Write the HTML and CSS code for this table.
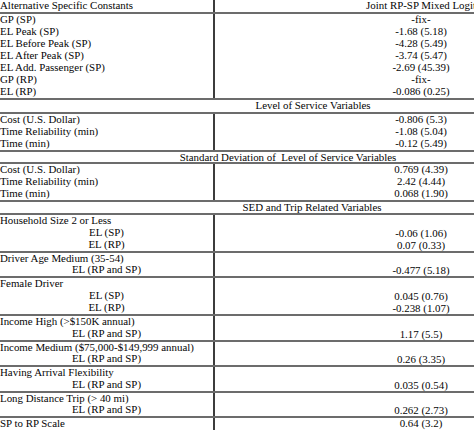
FILE: index.html
```html
<!DOCTYPE html>
<html>
<head>
<meta charset="utf-8">
<link rel="stylesheet" href="styles.css">
</head>
<body>
<div class="table">
  <div class="grp">
    <div class="row"><div class="l">Alternative Specific Constants</div><div class="r"><span>Joint RP-SP Mixed Logit</span></div></div>
  </div>
  <div class="grp">
    <div class="row"><div class="l">GP (SP)</div><div class="r"><span>-fix-</span></div></div>
    <div class="row"><div class="l">EL Peak (SP)</div><div class="r"><span>-1.68 (5.18)</span></div></div>
    <div class="row"><div class="l">EL Before Peak (SP)</div><div class="r"><span>-4.28 (5.49)</span></div></div>
    <div class="row"><div class="l">EL After Peak (SP)</div><div class="r"><span>-3.74 (5.47)</span></div></div>
    <div class="row"><div class="l">EL Add. Passenger (SP)</div><div class="r"><span>-2.69 (45.39)</span></div></div>
    <div class="row"><div class="l">GP (RP)</div><div class="r"><span>-fix-</span></div></div>
    <div class="row"><div class="l">EL (RP)</div><div class="r"><span>-0.086 (0.25)</span></div></div>
  </div>
  <div class="sec sec-los">Level of Service Variables</div>
  <div class="grp">
    <div class="row"><div class="l">Cost (U.S. Dollar)</div><div class="r"><span>-0.806 (5.3)</span></div></div>
    <div class="row"><div class="l">Time Reliability (min)</div><div class="r"><span>-1.08 (5.04)</span></div></div>
    <div class="row"><div class="l">Time (min)</div><div class="r"><span>-0.12 (5.49)</span></div></div>
  </div>
  <div class="sec sec-sd">Standard Deviation of&nbsp; Level of Service Variables</div>
  <div class="grp">
    <div class="row"><div class="l">Cost (U.S. Dollar)</div><div class="r"><span>0.769 (4.39)</span></div></div>
    <div class="row"><div class="l">Time Reliability (min)</div><div class="r"><span>2.42 (4.44)</span></div></div>
    <div class="row"><div class="l">Time (min)</div><div class="r"><span>0.068 (1.90)</span></div></div>
  </div>
  <div class="sec sec-sed">SED and Trip Related Variables</div>
  <div class="grp">
    <div class="row"><div class="l">Household Size 2 or Less</div><div class="r"></div></div>
    <div class="row"><div class="l sub">EL (SP)</div><div class="r low"><span>-0.06 (1.06)</span></div></div>
    <div class="row"><div class="l sub">EL (RP)</div><div class="r low"><span>0.07 (0.33)</span></div></div>
  </div>
  <div class="grp g2">
    <div class="row"><div class="l">Driver Age Medium (35-54)</div><div class="r"></div></div>
    <div class="row"><div class="l sub">EL (RP and SP)</div><div class="r low"><span>-0.477 (5.18)</span></div></div>
  </div>
  <div class="grp">
    <div class="row"><div class="l">Female Driver</div><div class="r"></div></div>
    <div class="row"><div class="l sub">EL (SP)</div><div class="r low"><span>0.045 (0.76)</span></div></div>
    <div class="row"><div class="l sub">EL (RP)</div><div class="r low"><span>-0.238 (1.07)</span></div></div>
  </div>
  <div class="grp g2">
    <div class="row"><div class="l">Income High (&gt;$150K annual)</div><div class="r"></div></div>
    <div class="row"><div class="l sub">EL (RP and SP)</div><div class="r low"><span>1.17 (5.5)</span></div></div>
  </div>
  <div class="grp g2">
    <div class="row"><div class="l">Income Medium ($75,000-$149,999 annual)</div><div class="r"></div></div>
    <div class="row"><div class="l sub">EL (RP and SP)</div><div class="r low"><span>0.26 (3.35)</span></div></div>
  </div>
  <div class="grp g2">
    <div class="row"><div class="l">Having Arrival Flexibility</div><div class="r"></div></div>
    <div class="row"><div class="l sub">EL (RP and SP)</div><div class="r low"><span>0.035 (0.54)</span></div></div>
  </div>
  <div class="grp g2">
    <div class="row"><div class="l">Long Distance Trip (&gt; 40 mi)</div><div class="r"></div></div>
    <div class="row"><div class="l sub">EL (RP and SP)</div><div class="r low"><span>0.262 (2.73)</span></div></div>
  </div>
  <div class="grp last">
    <div class="row"><div class="l">SP to RP Scale</div><div class="r"><span>0.64 (3.2)</span></div></div>
  </div>
</div>
</body>
</html>
```
FILE: styles.css
```css
html, body {
  margin: 0;
  padding: 0;
  background: #ffffff;
}
body {
  width: 474px;
  height: 430px;
  overflow: hidden;
  font-family: "Liberation Serif", "Times New Roman", serif;
  font-size: 10.9px;
  color: #050505;
}
.table {
  width: 474px;
  display: flex;
  flex-direction: column;
}
.grp {
  border-bottom: 2px solid #6c6c6c;
}
.row {
  display: flex;
  height: 12px;
  line-height: 11px;
  white-space: nowrap;
}
.g2 .row {
  height: 11.75px;
}
.l {
  width: 213px;
  flex: none;
  border-right: 2px solid #3c3c3c;
}
.sub {
  text-align: center;
}
.r {
  flex: 1;
  min-width: 0;
  display: flex;
  justify-content: center;
  padding-left: 153px;
}
.low {
  line-height: 12.5px;
}
.sec {
  height: 10.5px;
  line-height: 10px;
  display: flex;
  justify-content: center;
  white-space: nowrap;
  border-bottom: 2px solid #6c6c6c;
}
.sec-los {
  height: 11.5px;
  padding-left: 152px;
}
.sec-sd {
  padding-left: 102px;
}
.sec-sed {
  padding-left: 150px;
}
.last {
  border-bottom: 2px solid #e6e6e6;
}
```
